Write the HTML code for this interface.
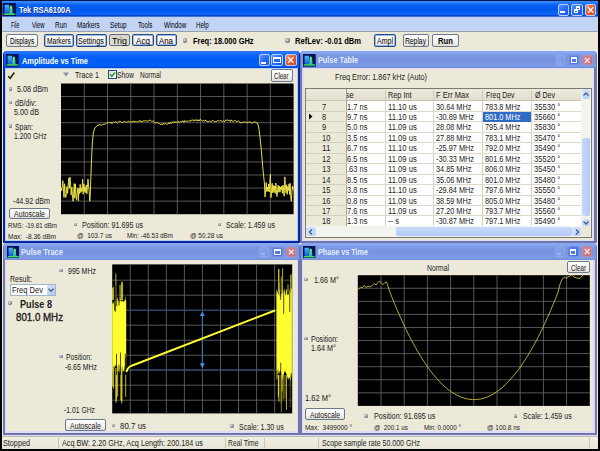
<!DOCTYPE html>
<html><head><meta charset="utf-8"><style>
html,body{margin:0;padding:0;width:600px;height:451px;overflow:hidden;background:#000;position:relative}
</style></head><body>
<div style="position:absolute;left:2px;top:0px;width:596px;height:1.2px;background:#081850"></div>
<div style="position:absolute;left:2px;top:1.2px;width:596px;height:15.8px;background:linear-gradient(#3a8cf8 0,#2a7cf8 12%,#0660f2 24%,#0058ec 62%,#0866f8 78%,#0a5ef0 86%,#0038c0 93%,#7a9ee8 100%)"></div>
<div style="position:absolute;left:2px;top:17px;width:596px;height:14.5px;background:#c2d4f4"></div>
<div style="position:absolute;left:2px;top:30.8px;width:596px;height:1.2px;background:#98a0b0"></div>
<div style="position:absolute;left:2px;top:32px;width:596px;height:18px;background:#ece9d8"></div>
<div style="position:absolute;left:2px;top:49.6px;width:596px;height:1px;background:#9a9ca8"></div>
<div style="position:absolute;left:2px;top:50px;width:596px;height:387px;background:#eeeef8"></div>
<div style="position:absolute;left:2px;top:436px;width:596px;height:13.3px;background:linear-gradient(#f2f0e4,#e8e5d6)"></div>
<div style="position:absolute;left:58px;top:438px;width:1px;height:10px;background:#c8c5b2"></div>
<div style="position:absolute;left:225px;top:438px;width:1px;height:10px;background:#c8c5b2"></div>
<div style="position:absolute;left:263.5px;top:438px;width:1px;height:10px;background:#c8c5b2"></div>
<div style="position:absolute;left:318px;top:438px;width:1px;height:10px;background:#c8c5b2"></div>
<div style="position:absolute;left:589px;top:438px;width:1px;height:10px;background:#c8c5b2"></div>
<svg style="position:absolute;left:3px;top:2.5px" width="13" height="13" viewBox="0 0 13 13"><rect x="0" y="0" width="13" height="13" fill="#061454"/><defs><linearGradient id="ig" x1="0" y1="0" x2="0" y2="1"><stop offset="0" stop-color="#48b8ff"/><stop offset="1" stop-color="#1058d8"/></linearGradient><linearGradient id="ig2" x1="0" y1="0" x2="0" y2="1"><stop offset="0" stop-color="#70f070"/><stop offset="1" stop-color="#20b8b0"/></linearGradient></defs><rect x="1.6" y="1.8" width="4.6" height="9" fill="url(#ig)"/><path d="M6.2 11 L6.7 4 Q8 1.2 9.3 4 L9.8 11 Z" fill="url(#ig2)"/><path d="M0.8 11.2 H12.2" stroke="#40e060" stroke-width="1.5"/></svg>
<div style="position:absolute;left:557.5px;top:3.5px;width:11.5px;height:12px;box-sizing:border-box;border:1px solid #b8d0ff;border-radius:2px;background:linear-gradient(135deg,#5a94ff,#2a6cf6 45%,#1a56e0)"></div>
<div style="position:absolute;left:560.38px;top:11.42px;width:4.6px;height:1.6px;background:#fff"></div>
<div style="position:absolute;left:571px;top:3.5px;width:12px;height:12px;box-sizing:border-box;border:1px solid #b8d0ff;border-radius:2px;background:linear-gradient(135deg,#5a94ff,#2a6cf6 45%,#1a56e0)"></div>
<div style="position:absolute;left:576.04px;top:5.9px;width:4.32px;height:4.32px;box-sizing:border-box;border:1px solid #fff;border-top-width:2px"></div>
<div style="position:absolute;left:573.64px;top:8.54px;width:4.32px;height:4.32px;box-sizing:border-box;border:1px solid #fff;border-top-width:2px;background:#2a68f0"></div>
<div style="position:absolute;left:584.5px;top:3.5px;width:11.5px;height:12px;box-sizing:border-box;border:1px solid #b8d0ff;border-radius:2px;background:linear-gradient(135deg,#f4a080,#e8602e 40%,#d04818)"></div>
<svg style="position:absolute;left:584.5px;top:3.5px" width="11.5" height="12"><path d="M3.11 3.24 L8.39 8.76 M8.39 3.24 L3.11 8.76" stroke="#fff" stroke-width="1.4"/></svg>
<div style="position:absolute;left:6.4px;top:34px;width:31.2px;height:13px;box-sizing:border-box;border:1px solid #6a7a90;border-radius:2px;background:linear-gradient(#fefefe,#f0efea 70%,#dedcd2)"></div>
<div style="position:absolute;left:43.7px;top:34px;width:30.6px;height:13px;box-sizing:border-box;border:1px solid #2a4a80;border-radius:2px;background:linear-gradient(#fdfdfb,#ecebe6);box-shadow:inset 0 0 0 1px #98b8f0"></div>
<div style="position:absolute;left:75.8px;top:34px;width:31.2px;height:13px;box-sizing:border-box;border:1px solid #2a4a80;border-radius:2px;background:linear-gradient(#fdfdfb,#ecebe6);box-shadow:inset 0 0 0 1px #98b8f0"></div>
<div style="position:absolute;left:108.7px;top:34.3px;width:21.8px;height:12.2px;box-sizing:border-box;border:1px solid #5a6a80;border-radius:2px;background:linear-gradient(#d8d5c8,#e4e1d4)"></div>
<div style="position:absolute;left:132px;top:34.3px;width:21.5px;height:12.2px;box-sizing:border-box;border:1px solid #2a4a80;border-radius:2px;background:linear-gradient(#fdfdfb,#ecebe6);box-shadow:inset 0 0 0 1px #98b8f0"></div>
<div style="position:absolute;left:155.5px;top:34.3px;width:21.5px;height:12.2px;box-sizing:border-box;border:1px solid #2a4a80;border-radius:2px;background:linear-gradient(#fdfdfb,#ecebe6);box-shadow:inset 0 0 0 1px #98b8f0"></div>
<div style="position:absolute;left:374px;top:34.4px;width:22px;height:12.6px;box-sizing:border-box;border:1px solid #2a4a80;border-radius:2px;background:linear-gradient(#fdfdfb,#ecebe6);box-shadow:inset 0 0 0 1px #98b8f0"></div>
<div style="position:absolute;left:403px;top:34.4px;width:26px;height:12.6px;box-sizing:border-box;border:1px solid #6a7a90;border-radius:2px;background:linear-gradient(#fefefe,#f0efea 70%,#dedcd2)"></div>
<div style="position:absolute;left:432px;top:34.4px;width:26.6px;height:12.6px;box-sizing:border-box;border:1px solid #6a7a90;border-radius:2px;background:linear-gradient(#fefefe,#f0efea 70%,#dedcd2)"></div>
<div style="position:absolute;left:182.8px;top:38.3px;width:4.4px;height:4.4px;border-radius:50%;background:radial-gradient(circle at 40% 40%,#f4f4f4 0,#a8b0bc 30%,#6a7080 65%,#505664)"></div>
<div style="position:absolute;left:285.4px;top:38.3px;width:4.4px;height:4.4px;border-radius:50%;background:radial-gradient(circle at 40% 40%,#f4f4f4 0,#a8b0bc 30%,#6a7080 65%,#505664)"></div>
<div style="position:absolute;left:3.2px;top:50.6px;width:296.8px;height:192.4px;background:#08289a;border-radius:4px 4px 0 0"></div>
<div style="position:absolute;left:4.2px;top:50.6px;width:294.8px;height:17.1px;background:linear-gradient(#3070e8 0,#2a78f8 8%,#0a64fa 22%,#005cf4 55%,#0060f8 88%,#0042c8 100%);border-radius:3px 3px 0 0"></div>
<div style="position:absolute;left:5px;top:67.7px;width:293px;height:173.1px;background:#b8ccf8"></div>
<div style="position:absolute;left:6.4px;top:68.6px;width:290.8px;height:171.2px;background:#ece9d8"></div>
<div style="position:absolute;left:300px;top:50.6px;width:296.6px;height:192.4px;background:#7076ac;border-radius:4px 4px 0 0"></div>
<div style="position:absolute;left:301px;top:50.6px;width:294.6px;height:17.1px;background:linear-gradient(#8aa8f0 0,#88a6f0 10%,#7a98e2 30%,#7694e0 60%,#7e9ee8 88%,#7088d8 100%);border-radius:3px 3px 0 0"></div>
<div style="position:absolute;left:302.3px;top:67.7px;width:292.2px;height:173.3px;background:#dcdcf6"></div>
<div style="position:absolute;left:303.5px;top:68.6px;width:289.8px;height:171.4px;background:#ece9d8"></div>
<div style="position:absolute;left:2.6px;top:243px;width:297.4px;height:192px;background:#7076ac;border-radius:4px 4px 0 0"></div>
<div style="position:absolute;left:3.6px;top:243px;width:295.4px;height:16.5px;background:linear-gradient(#8aa8f0 0,#88a6f0 10%,#7a98e2 30%,#7694e0 60%,#7e9ee8 88%,#7088d8 100%);border-radius:3px 3px 0 0"></div>
<div style="position:absolute;left:5px;top:259.5px;width:292.8px;height:173.2px;background:#dcdcf6"></div>
<div style="position:absolute;left:6.2px;top:260.4px;width:291px;height:171.1px;background:#ece9d8"></div>
<div style="position:absolute;left:300px;top:243px;width:296.6px;height:192px;background:#7076ac;border-radius:4px 4px 0 0"></div>
<div style="position:absolute;left:301px;top:243px;width:294.6px;height:16.5px;background:linear-gradient(#8aa8f0 0,#88a6f0 10%,#7a98e2 30%,#7694e0 60%,#7e9ee8 88%,#7088d8 100%);border-radius:3px 3px 0 0"></div>
<div style="position:absolute;left:302px;top:259.5px;width:292.5px;height:173.2px;background:#dcdcf6"></div>
<div style="position:absolute;left:302.8px;top:260.4px;width:290.5px;height:171.1px;background:#ece9d8"></div>
<div style="position:absolute;left:2px;top:435px;width:596px;height:1.3px;background:#e0e0f8"></div>
<div style="position:absolute;left:2px;top:436.3px;width:596px;height:0.7px;background:#bcb8a8"></div>
<svg style="position:absolute;left:6.3px;top:53.9px" width="12.7" height="12.7" viewBox="0 0 13 13"><rect x="0" y="0" width="13" height="13" fill="#061454"/><defs><linearGradient id="ig" x1="0" y1="0" x2="0" y2="1"><stop offset="0" stop-color="#48b8ff"/><stop offset="1" stop-color="#1058d8"/></linearGradient><linearGradient id="ig2" x1="0" y1="0" x2="0" y2="1"><stop offset="0" stop-color="#70f070"/><stop offset="1" stop-color="#20b8b0"/></linearGradient></defs><rect x="1.6" y="1.8" width="4.6" height="9" fill="url(#ig)"/><path d="M6.2 11 L6.7 4 Q8 1.2 9.3 4 L9.8 11 Z" fill="url(#ig2)"/><path d="M0.8 11.2 H12.2" stroke="#40e060" stroke-width="1.5"/></svg>
<svg style="position:absolute;left:303.2px;top:54px" width="12.7" height="12.7" viewBox="0 0 13 13"><rect x="0" y="0" width="13" height="13" fill="#061454"/><defs><linearGradient id="ig" x1="0" y1="0" x2="0" y2="1"><stop offset="0" stop-color="#48b8ff"/><stop offset="1" stop-color="#1058d8"/></linearGradient><linearGradient id="ig2" x1="0" y1="0" x2="0" y2="1"><stop offset="0" stop-color="#70f070"/><stop offset="1" stop-color="#20b8b0"/></linearGradient></defs><rect x="1.6" y="1.8" width="4.6" height="9" fill="url(#ig)"/><path d="M6.2 11 L6.7 4 Q8 1.2 9.3 4 L9.8 11 Z" fill="url(#ig2)"/><path d="M0.8 11.2 H12.2" stroke="#40e060" stroke-width="1.5"/></svg>
<svg style="position:absolute;left:6.5px;top:246px" width="12.4" height="12.4" viewBox="0 0 13 13"><rect x="0" y="0" width="13" height="13" fill="#061454"/><defs><linearGradient id="ig" x1="0" y1="0" x2="0" y2="1"><stop offset="0" stop-color="#48b8ff"/><stop offset="1" stop-color="#1058d8"/></linearGradient><linearGradient id="ig2" x1="0" y1="0" x2="0" y2="1"><stop offset="0" stop-color="#70f070"/><stop offset="1" stop-color="#20b8b0"/></linearGradient></defs><rect x="1.6" y="1.8" width="4.6" height="9" fill="url(#ig)"/><path d="M6.2 11 L6.7 4 Q8 1.2 9.3 4 L9.8 11 Z" fill="url(#ig2)"/><path d="M0.8 11.2 H12.2" stroke="#40e060" stroke-width="1.5"/></svg>
<svg style="position:absolute;left:303.2px;top:246px" width="12.4" height="12.4" viewBox="0 0 13 13"><rect x="0" y="0" width="13" height="13" fill="#061454"/><defs><linearGradient id="ig" x1="0" y1="0" x2="0" y2="1"><stop offset="0" stop-color="#48b8ff"/><stop offset="1" stop-color="#1058d8"/></linearGradient><linearGradient id="ig2" x1="0" y1="0" x2="0" y2="1"><stop offset="0" stop-color="#70f070"/><stop offset="1" stop-color="#20b8b0"/></linearGradient></defs><rect x="1.6" y="1.8" width="4.6" height="9" fill="url(#ig)"/><path d="M6.2 11 L6.7 4 Q8 1.2 9.3 4 L9.8 11 Z" fill="url(#ig2)"/><path d="M0.8 11.2 H12.2" stroke="#40e060" stroke-width="1.5"/></svg>
<div style="position:absolute;left:258.5px;top:54px;width:11.2px;height:12px;box-sizing:border-box;border:1px solid #b8d0ff;border-radius:2px;background:linear-gradient(135deg,#5a94ff,#2a6cf6 45%,#1a56e0)"></div>
<div style="position:absolute;left:261.3px;top:61.92px;width:4.48px;height:1.6px;background:#fff"></div>
<div style="position:absolute;left:271px;top:54px;width:12px;height:12px;box-sizing:border-box;border:1px solid #b8d0ff;border-radius:2px;background:linear-gradient(135deg,#5a94ff,#2a6cf6 45%,#1a56e0)"></div>
<div style="position:absolute;left:273.4px;top:56.64px;width:7.2px;height:6.72px;box-sizing:border-box;border:1px solid #fff;border-top-width:2px"></div>
<div style="position:absolute;left:285px;top:54px;width:11.5px;height:12px;box-sizing:border-box;border:1px solid #b8d0ff;border-radius:2px;background:linear-gradient(135deg,#f4a080,#e8602e 40%,#d04818)"></div>
<svg style="position:absolute;left:285px;top:54px" width="11.5" height="12"><path d="M3.11 3.24 L8.39 8.76 M8.39 3.24 L3.11 8.76" stroke="#fff" stroke-width="1.4"/></svg>
<div style="position:absolute;left:555.5px;top:54.5px;width:9.8px;height:10.8px;box-sizing:border-box;border:1px solid #8ca6ea;border-radius:2px;background:linear-gradient(135deg,#88a4ea,#7a96e2)"></div>
<div style="position:absolute;left:557.95px;top:61.63px;width:3.92px;height:1.6px;background:#a0b4ec"></div>
<div style="position:absolute;left:569px;top:54.5px;width:10.3px;height:10.8px;box-sizing:border-box;border:1px solid #6a8ce4;border-radius:2px;background:linear-gradient(135deg,#5a80e4,#4870d8)"></div>
<div style="position:absolute;left:571.06px;top:56.88px;width:6.18px;height:6.05px;box-sizing:border-box;border:1px solid #fff;border-top-width:2px"></div>
<div style="position:absolute;left:582px;top:54.5px;width:10.5px;height:10.8px;box-sizing:border-box;border:1px solid #c888a0;border-radius:2px;background:linear-gradient(135deg,#d08890,#c06c7c)"></div>
<svg style="position:absolute;left:582px;top:54.5px" width="10.5" height="10.8"><path d="M2.83 2.92 L7.67 7.88 M7.67 2.92 L2.83 7.88" stroke="#f4e0e8" stroke-width="1.4"/></svg>
<div style="position:absolute;left:258.7px;top:247px;width:10px;height:9.7px;box-sizing:border-box;border:1px solid #8ca6ea;border-radius:2px;background:linear-gradient(135deg,#88a4ea,#7a96e2)"></div>
<div style="position:absolute;left:261.2px;top:253.4px;width:4px;height:1.6px;background:#a0b4ec"></div>
<div style="position:absolute;left:272px;top:247px;width:11px;height:9.9px;box-sizing:border-box;border:1px solid #6a8ce4;border-radius:2px;background:linear-gradient(135deg,#5a80e4,#4870d8)"></div>
<div style="position:absolute;left:274.2px;top:249.18px;width:6.6px;height:5.54px;box-sizing:border-box;border:1px solid #fff;border-top-width:2px"></div>
<div style="position:absolute;left:285.8px;top:247px;width:10.5px;height:9.9px;box-sizing:border-box;border:1px solid #c888a0;border-radius:2px;background:linear-gradient(135deg,#d08890,#c06c7c)"></div>
<svg style="position:absolute;left:285.8px;top:247px" width="10.5" height="9.9"><path d="M2.83 2.67 L7.67 7.23 M7.67 2.67 L2.83 7.23" stroke="#f4e0e8" stroke-width="1.4"/></svg>
<div style="position:absolute;left:554.5px;top:246.2px;width:10px;height:11px;box-sizing:border-box;border:1px solid #8ca6ea;border-radius:2px;background:linear-gradient(135deg,#88a4ea,#7a96e2)"></div>
<div style="position:absolute;left:557px;top:253.46px;width:4px;height:1.6px;background:#a0b4ec"></div>
<div style="position:absolute;left:568px;top:246.2px;width:10.5px;height:11px;box-sizing:border-box;border:1px solid #6a8ce4;border-radius:2px;background:linear-gradient(135deg,#5a80e4,#4870d8)"></div>
<div style="position:absolute;left:570.1px;top:248.62px;width:6.3px;height:6.16px;box-sizing:border-box;border:1px solid #fff;border-top-width:2px"></div>
<div style="position:absolute;left:581.5px;top:246.2px;width:10.5px;height:11px;box-sizing:border-box;border:1px solid #c888a0;border-radius:2px;background:linear-gradient(135deg,#d08890,#c06c7c)"></div>
<svg style="position:absolute;left:581.5px;top:246.2px" width="10.5" height="11"><path d="M2.83 2.97 L7.67 8.03 M7.67 2.97 L2.83 8.03" stroke="#f4e0e8" stroke-width="1.4"/></svg>
<svg style="position:absolute;left:6px;top:70px" width="12" height="11"><path d="M2.2 6.2 L4.2 8.3 L8.3 2.5" stroke="#f0e8a0" stroke-width="2.6" fill="none" opacity="0.5"/><path d="M2.2 6.2 L4.2 8.3 L8.3 2.5" stroke="#28280a" stroke-width="1.6" fill="none"/></svg>
<svg style="position:absolute;left:62px;top:71px" width="9" height="7"><path d="M1 1.5 L7 1.5 L4 5.5Z" fill="#8a90a8"/></svg>
<div style="position:absolute;left:107.5px;top:70px;width:9px;height:9px;box-sizing:border-box;border:1px solid #1c5180;background:linear-gradient(135deg,#dcdcd6,#fff)"></div>
<svg style="position:absolute;left:107.5px;top:70px" width="9" height="9"><path d="M2 4.3 L3.8 6.3 L7 2.5" stroke="#21a121" stroke-width="1.5" fill="none"/></svg>
<div style="position:absolute;left:271px;top:69px;width:21.5px;height:12.5px;box-sizing:border-box;border:1px solid #6a7a90;border-radius:2px;background:linear-gradient(#fefefe,#f0efea 70%,#dedcd2)"></div>
<div style="position:absolute;left:8.8px;top:87.3px;width:3.4px;height:3.4px;border-radius:50%;background:radial-gradient(circle at 40% 40%,#f4f4f4 0,#a8b0bc 30%,#6a7080 65%,#505664)"></div>
<div style="position:absolute;left:8.8px;top:100.8px;width:3.4px;height:3.4px;border-radius:50%;background:radial-gradient(circle at 40% 40%,#f4f4f4 0,#a8b0bc 30%,#6a7080 65%,#505664)"></div>
<div style="position:absolute;left:8.8px;top:124.2px;width:3.4px;height:3.4px;border-radius:50%;background:radial-gradient(circle at 40% 40%,#f4f4f4 0,#a8b0bc 30%,#6a7080 65%,#505664)"></div>
<div style="position:absolute;left:9px;top:207.5px;width:41px;height:11.3px;box-sizing:border-box;border:1px solid #6a7a90;border-radius:2px;background:linear-gradient(#fefefe,#f0efea 70%,#dedcd2)"></div>
<div style="position:absolute;left:73.8px;top:222.8px;width:3.4px;height:3.4px;border-radius:50%;background:radial-gradient(circle at 40% 40%,#f4f4f4 0,#a8b0bc 30%,#6a7080 65%,#505664)"></div>
<div style="position:absolute;left:217.8px;top:222.8px;width:3.4px;height:3.4px;border-radius:50%;background:radial-gradient(circle at 40% 40%,#f4f4f4 0,#a8b0bc 30%,#6a7080 65%,#505664)"></div>
<svg style="position:absolute;left:61px;top:83px;overflow:hidden" width="233" height="132" viewBox="61 83 233 132"><rect x="61" y="83.5" width="232.6" height="130.7" fill="#000"/><path d="M84.26 83.5V214.2M107.52 83.5V214.2M130.78 83.5V214.2M154.04 83.5V214.2M177.3 83.5V214.2M200.56 83.5V214.2M223.82 83.5V214.2M247.08 83.5V214.2M270.34 83.5V214.2M61 96.57H293.6M61 109.64H293.6M61 122.71H293.6M61 135.78H293.6M61 148.85H293.6M61 161.92H293.6M61 174.99H293.6M61 188.06H293.6M61 201.13H293.6" stroke="#6c6c6c" stroke-width="0.8" fill="none"/><polyline points="61,187.75 61.6,190.86 62.2,186.67 62.8,180.7 63.4,188.15 64,197.47 64.6,183.76 65.2,193.41 65.8,197.4 66.4,193.28 67,186.4 67.6,193.35 68.2,185.09 68.8,178.02 69.4,188.19 70,177.03 70.6,184.61 71.2,195.12 71.8,187.26 72.4,194.4 73,201.2 73.6,194.15 74.2,183.6 74.8,198.32 75.4,183.83 76,195.31 76.6,199.72 77.2,192.98 77.8,188.16 78.4,200.79 79,188.2 79.6,193.74 80.2,184.39 80.8,192.43 81.4,188.39 82,191.34 82.6,179.25 83.2,194.19 83.8,183.92 84.4,191.33 85,187.11 85.6,192.65 86.2,184.97 86.8,193.91 87.4,187.35 88,179.14 88.6,186.08 89.2,191.81 89.8,201.28 90.4,192.09 90.6,185 91.3,165 92.2,145 93.3,133 94.8,128 97,125.8 99.5,124.7 100,124.01 100.8,125.26 101.6,125.28 102.4,124.55 103.2,124.47 104,123.7 104.8,124.19 105.6,124.08 106.4,123.37 107.2,122.98 108,122.57 108.8,122.51 109.6,122.66 110.4,122.5 111.2,122.1 112,123.49 112.8,122.46 113.6,121.8 114.4,122.62 115.2,121.66 116,122.42 116.8,122.29 117.6,122.97 118.4,122.3 119.2,121.26 120,121.46 120.8,121.72 121.6,122.16 122.4,122.72 123.2,122.08 124,121.85 124.8,121.19 125.6,121.84 126.4,122.7 127.2,121.78 128,121.44 128.8,121.1 129.6,122.15 130.4,122.09 131.2,121.58 132,121.92 132.8,121.56 133.6,120.96 134.4,122.26 135.2,121.16 136,121.72 136.8,122.1 137.6,121.79 138.4,120.95 139.2,121.56 140,120.56 140.8,121.91 141.6,121.28 142.4,121.92 143.2,120.84 144,120.51 144.8,120.99 145.6,120.82 146.4,120.98 147.2,120.87 148,121.14 148.8,121.07 149.6,120.07 150.4,120.22 151.2,120.64 152,121.54 152.8,120.68 153.6,121.46 154.4,122.18 155.2,122.96 156,122.92 156.8,122.67 157.6,122.48 158.4,123.51 159.2,123.3 160,124.36 160.8,124.39 161.6,123.84 162.4,125.04 163.2,123.44 164,123.46 164.8,124.05 165.6,123.72 166.4,123.85 167.2,124.6 168,123.75 168.8,122.46 169.6,123.89 170.4,122.67 171.2,123 172,123.15 172.8,121.69 173.6,122.02 174.4,122.47 175.2,121.45 176,122.63 176.8,121.78 177.6,122.14 178.4,121.14 179.2,122.66 180,122.21 180.8,121.7 181.6,122.14 182.4,120.88 183.2,120.94 184,122.35 184.8,120.52 185.6,121.44 186.4,121.11 187.2,121.36 188,121.18 188.8,121.05 189.6,120.74 190.4,121.48 191.2,119.99 192,120.62 192.8,119.61 193.6,120.95 194.4,120.77 195.2,119.62 196,120.76 196.8,119.65 197.6,121.18 198.4,119.77 199.2,121.01 200,119.52 200.8,119.89 201.6,120.46 202.4,120.98 203.2,120.25 204,120.71 204.8,121.29 205.6,119.97 206.4,121.26 207.2,121.6 208,121.24 208.8,121.57 209.6,121.09 210.4,121.69 211.2,121.82 212,120.5 212.8,120.56 213.6,121.22 214.4,121.87 215.2,121.69 216,121.38 216.8,121.67 217.6,120.53 218.4,120.49 219.2,121.33 220,120.41 220.8,120.27 221.6,121.36 222.4,121.06 223.2,120.94 224,121.44 224.8,121.61 225.6,120.09 226.4,120.31 227.2,120.02 228,120.11 228.8,120.73 229.6,119.96 230.4,121.51 231.2,120.01 232,120.5 232.8,121.7 233.6,121.09 234.4,120.42 235.2,120.64 236,121.15 236.8,121.8 237.6,121.37 238.4,121.02 239.2,121.64 240,122.41 240.8,122.62 241.6,122.73 242.4,122.79 243.2,121.65 244,122.18 244.8,122.21 245.6,122.22 246.4,122.13 247.2,122.8 248,122.37 248.8,121.98 249.6,122.15 250.4,121.82 251.2,123 252,123.29 252.8,122.76 253.6,122.26 254.4,122.06 255.2,121.85 256,122.44 256.8,122.94 257.3,122.8 258.5,126 260,137 261.5,152 263,170 264.4,183 265,196.98 265.6,190.62 266.2,182.53 266.8,191.61 267.4,187.04 268,191.19 268.6,183.98 269.2,192.09 269.8,182.7 270.4,174.17 271,197.63 271.6,190.41 272.2,183.4 272.8,192.88 273.4,185.47 274,192.07 274.6,185.86 275.2,193.5 275.8,183.02 276.4,189.58 277,196.5 277.6,189.83 278.2,185.23 278.8,192.27 279.4,186.16 280,192.13 280.6,186.95 281.2,189.75 281.8,185.94 282.4,193.3 283,185 283.6,191.24 284.2,196.22 284.8,176.91 285.4,185.26 286,192.75 286.6,184.77 287.2,194.35 287.8,186.42 288.4,190.49 289,183.86 289.6,194.45 290.2,183.32 290.8,198.58 291.4,201.22 292,190.91 292.6,186.03 293.2,190.29" stroke="#f0e848" stroke-width="0.95" fill="none"/></svg>
<svg style="position:absolute;left:112px;top:264px;overflow:hidden" width="181" height="150" viewBox="112 264 181 150"><rect x="112.2" y="264.4" width="180" height="149" fill="#000"/><path d="M130.25 264.4V413.4M148.3 264.4V413.4M166.35 264.4V413.4M184.4 264.4V413.4M202.45 264.4V413.4M220.5 264.4V413.4M238.55 264.4V413.4M256.6 264.4V413.4M274.65 264.4V413.4M112.2 280.2H292.2M112.2 295.2H292.2M112.2 310.2H292.2M112.2 325.2H292.2M112.2 340.2H292.2M112.2 355.2H292.2M112.2 370.2H292.2M112.2 385.2H292.2M112.2 400.2H292.2" stroke="#6c6c6c" stroke-width="0.8" fill="none"/><path d="M130 310.2H275 M130 369.8H275" stroke="#1e4a7a" stroke-width="1.1" fill="none"/><path d="M202.3 313V367" stroke="#3a7cc8" stroke-width="0.9" fill="none"/><path d="M199.9 316 L202.3 311.2 L204.7 316Z M199.9 363.3 L202.3 368.3 L204.7 363.3Z" fill="#3a90f0"/><polygon points="112.2,301.08 112.7,304.59 113.2,301.59 113.7,304.42 114.2,300.06 114.7,300.13 115.2,300.88 115.7,300.79 116.2,299.01 116.7,299.86 117.2,297.12 117.7,298.49 118.2,300.46 118.7,301.26 119.2,302.71 119.7,298.74 120.2,297.41 120.7,300.76 121.2,302.01 121.7,300.45 122.2,301.65 122.7,299.53 123.2,301.6 123.7,301.44 124.2,301.81 124.7,300.31 125.2,295.58 125.7,297.78 126.2,301.01 126.2,370.03 125.7,365.94 125.2,366.2 124.7,367.07 124.2,371.15 123.7,370.26 123.2,372.24 122.7,369.54 122.2,366.25 121.7,371.6 121.2,373.03 120.7,365.39 120.2,371.52 119.7,373.86 119.2,368.51 118.7,371.44 118.2,371.75 117.7,370.27 117.2,367.74 116.7,365.38 116.2,365.81 115.7,365.04 115.2,366.81 114.7,369.27 114.2,365.01 113.7,367.79 113.2,367.2 112.7,373.75 112.2,367.37" fill="#ffff30"/><path d="M120.97 300V284.52M121.69 300V281.79M112.54 300V287.95M122.6 300V282.06M119.73 300V285.19M113.39 300V286.74M115.9 300V273.49M116.09 300V286.59M115.27 300V286.8" stroke="#e8e030" stroke-width="0.8" fill="none"/><path d="M125.67 368V396.85M117.66 368V396.5M121.73 368V403.41M120.83 368V400.43M113.55 368V388.54M115.93 368V402.84M116.61 368V398.63M112.67 368V386.46M116.13 368V401.13M121.84 368V401.22" stroke="#e8e030" stroke-width="0.8" fill="none"/><path d="M116.78 286V306.2M119.04 286V305.6M114.54 286V310.72M115.59 286V311.74M125.17 286V300.21" stroke="#000" stroke-width="0.7" fill="none"/><path d="M118.97 375V364.76M125.59 375V358.09M116.49 375V353.78M125.29 375V353.79M120.56 375V352.55" stroke="#000" stroke-width="0.7" fill="none"/><path d="M126.5 372 Q127.5 367.5 131 366 L275 310.5" stroke="#ffff30" stroke-width="1.9" fill="none"/><polygon points="276.4,291.72 276.9,288.19 277.4,291.58 277.9,293.33 278.4,295.08 278.9,287.22 279.4,291.43 279.9,289.72 280.4,290.1 280.9,294.56 281.4,293.76 281.9,288.08 282.4,293.42 282.9,289.61 283.4,290.54 283.9,292.3 284.4,290.85 284.9,287.43 285.4,294.51 285.9,295.42 286.4,289.39 286.9,288.71 287.4,295.61 287.9,294.31 288.4,295.22 288.9,291.94 289.4,287.45 289.9,291.06 290.4,292.8 290.9,287.44 291.4,288.15 291.9,290.09 291.9,372.57 291.4,374.67 290.9,380.12 290.4,372.43 289.9,378.03 289.4,377.79 288.9,377.63 288.4,380.29 287.9,376.57 287.4,379.61 286.9,373.48 286.4,375.13 285.9,371.99 285.4,372.43 284.9,370.22 284.4,372.3 283.9,373.33 283.4,380.99 282.9,373.47 282.4,379.82 281.9,380.12 281.4,379.07 280.9,369.02 280.4,372.79 279.9,370.69 279.4,374.41 278.9,369.04 278.4,374.83 277.9,371.78 277.4,379.64 276.9,378.84 276.4,380.43" fill="#ffff30"/><path d="M287.96 292V284.53M280.53 292V278.12M281.16 292V276.15M282.61 292V268.35M279.01 292V269.16M290.54 292V274.94M279.91 292V283.13M291.95 292V274M278.66 292V268.85" stroke="#e8e030" stroke-width="0.8" fill="none"/><path d="M278.36 375V397.86M278.37 375V395.5M280.88 375V403.1M290.31 375V407.24M283.19 375V399.52M284.86 375V398.67M282.07 375V391.43M281.16 375V412.26M278.89 375V401.58M286.44 375V409.85" stroke="#e8e030" stroke-width="0.8" fill="none"/><path d="M280.24 268V296.78M280.73 268V299.99M283.69 268V313.85M289.73 268V311.82M277.33 268V290.81" stroke="#000" stroke-width="0.7" fill="none"/><path d="M287.64 413V382.39M284.1 413V374.68M277 413V369.79M290.9 413V380.64M289.83 413V384.31M280.73 413V362.73" stroke="#000" stroke-width="0.7" fill="none"/></svg>
<svg style="position:absolute;left:357px;top:275px;overflow:hidden" width="233" height="131" viewBox="357 275 233 131"><rect x="357.8" y="275.2" width="232" height="130.7" fill="#000"/><path d="M381 275.2V405.9M404.2 275.2V405.9M427.4 275.2V405.9M450.6 275.2V405.9M473.8 275.2V405.9M497 275.2V405.9M520.2 275.2V405.9M543.4 275.2V405.9M566.6 275.2V405.9M357.8 288.27H589.8M357.8 301.34H589.8M357.8 314.41H589.8M357.8 327.48H589.8M357.8 340.55H589.8M357.8 353.62H589.8M357.8 366.69H589.8M357.8 379.76H589.8M357.8 392.83H589.8" stroke="#6c6c6c" stroke-width="0.8" fill="none"/><polyline points="357.8,289.5 359,288.5 360.5,287.3 362,288 364.3,285.3 366,287.6 368,286.2 370,287 372,285.5 374.3,283.5 376,285 378,282.5 379.3,281 381,282.5 383,284.6 385,282.5 386.5,282 388.3,287 389.5,291 390,292.35 391.5,296.15 393,299.87 394.5,303.53 396,307.12 397.5,310.65 399,314.1 400.5,317.49 402,320.8 403.5,324.05 405,327.23 406.5,330.35 408,333.39 409.5,336.36 411,339.27 412.5,342.11 414,344.88 415.5,347.58 417,350.22 418.5,352.78 420,355.28 421.5,357.71 423,360.06 424.5,362.36 426,364.58 427.5,366.73 429,368.82 430.5,370.84 432,372.79 433.5,374.67 435,376.48 436.5,378.23 438,379.9 439.5,381.51 441,383.05 442.5,384.52 444,385.92 445.5,387.25 447,388.52 448.5,389.72 450,390.84 451.5,391.91 453,392.9 454.5,393.82 456,394.68 457.5,395.46 459,396.18 460.5,396.83 462,397.41 463.5,397.92 465,398.37 466.5,398.75 468,399.05 469.5,399.29 471,399.46 472.5,399.57 474,399.6 475.5,399.57 477,399.46 478.5,399.29 480,399.05 481.5,398.75 483,398.37 484.5,397.92 486,397.41 487.5,396.83 489,396.18 490.5,395.46 492,394.68 493.5,393.82 495,392.9 496.5,391.91 498,390.84 499.5,389.72 501,388.52 502.5,387.25 504,385.92 505.5,384.52 507,383.05 508.5,381.51 510,379.9 511.5,378.23 513,376.48 514.5,374.67 516,372.79 517.5,370.84 519,368.82 520.5,366.73 522,364.58 523.5,362.36 525,360.06 526.5,357.71 528,355.28 529.5,352.78 531,350.22 532.5,347.58 534,344.88 535.5,342.11 537,339.27 538.5,336.36 540,333.39 541.5,330.35 543,327.23 544.5,324.05 546,320.8 547.5,317.49 549,314.1 550.5,310.65 552,307.12 553.5,303.53 555,299.87 556.5,296.15 558,292.35 559.5,286 560.5,282.8 561.8,280 563,278.2 564.5,277 566,278.5 568,277 570,276 571.5,274.8 573,276 575,277.5 577,278 580,278.5 582,276 583.5,274.5 585,272 590,270" stroke="#c8c040" stroke-width="0.9" fill="none"/></svg>
<div style="position:absolute;left:304.6px;top:87.8px;width:287.7px;height:150px;background:#7a7a72"></div>
<div style="position:absolute;left:305.6px;top:88.8px;width:285.7px;height:148px;background:#fff"></div>
<div style="position:absolute;left:305.6px;top:88.8px;width:275.4px;height:12.2px;background:linear-gradient(#ebeadb,#e2dfcf)"></div>
<div style="position:absolute;left:305.6px;top:100.3px;width:275.4px;height:0.9px;background:#c8c4b0"></div>
<div style="position:absolute;left:305.6px;top:101px;width:40.4px;height:125.4px;background:#ebe9d8"></div>
<div style="position:absolute;left:345.5px;top:88.8px;width:0.9px;height:137.6px;background:#a8a590"></div>
<div style="position:absolute;left:384.6px;top:101px;width:0.9px;height:125.4px;background:#d6d3c4"></div>
<div style="position:absolute;left:384.6px;top:89.8px;width:0.9px;height:10.7px;background:#cfccbc"></div>
<div style="position:absolute;left:433.4px;top:101px;width:0.9px;height:125.4px;background:#d6d3c4"></div>
<div style="position:absolute;left:433.4px;top:89.8px;width:0.9px;height:10.7px;background:#cfccbc"></div>
<div style="position:absolute;left:481.6px;top:101px;width:0.9px;height:125.4px;background:#d6d3c4"></div>
<div style="position:absolute;left:481.6px;top:89.8px;width:0.9px;height:10.7px;background:#cfccbc"></div>
<div style="position:absolute;left:531px;top:101px;width:0.9px;height:125.4px;background:#d6d3c4"></div>
<div style="position:absolute;left:531px;top:89.8px;width:0.9px;height:10.7px;background:#cfccbc"></div>
<div style="position:absolute;left:580.5px;top:101px;width:0.5px;height:125.4px;background:#d6d3c4"></div>
<div style="position:absolute;left:346px;top:110.95px;width:235px;height:0.9px;background:#dcd9ca"></div>
<div style="position:absolute;left:305.6px;top:110.95px;width:40.4px;height:0.9px;background:#d4d0bf"></div>
<div style="position:absolute;left:346px;top:121.4px;width:235px;height:0.9px;background:#dcd9ca"></div>
<div style="position:absolute;left:305.6px;top:121.4px;width:40.4px;height:0.9px;background:#d4d0bf"></div>
<div style="position:absolute;left:346px;top:131.85px;width:235px;height:0.9px;background:#dcd9ca"></div>
<div style="position:absolute;left:305.6px;top:131.85px;width:40.4px;height:0.9px;background:#d4d0bf"></div>
<div style="position:absolute;left:346px;top:142.3px;width:235px;height:0.9px;background:#dcd9ca"></div>
<div style="position:absolute;left:305.6px;top:142.3px;width:40.4px;height:0.9px;background:#d4d0bf"></div>
<div style="position:absolute;left:346px;top:152.75px;width:235px;height:0.9px;background:#dcd9ca"></div>
<div style="position:absolute;left:305.6px;top:152.75px;width:40.4px;height:0.9px;background:#d4d0bf"></div>
<div style="position:absolute;left:346px;top:163.2px;width:235px;height:0.9px;background:#dcd9ca"></div>
<div style="position:absolute;left:305.6px;top:163.2px;width:40.4px;height:0.9px;background:#d4d0bf"></div>
<div style="position:absolute;left:346px;top:173.65px;width:235px;height:0.9px;background:#dcd9ca"></div>
<div style="position:absolute;left:305.6px;top:173.65px;width:40.4px;height:0.9px;background:#d4d0bf"></div>
<div style="position:absolute;left:346px;top:184.1px;width:235px;height:0.9px;background:#dcd9ca"></div>
<div style="position:absolute;left:305.6px;top:184.1px;width:40.4px;height:0.9px;background:#d4d0bf"></div>
<div style="position:absolute;left:346px;top:194.55px;width:235px;height:0.9px;background:#dcd9ca"></div>
<div style="position:absolute;left:305.6px;top:194.55px;width:40.4px;height:0.9px;background:#d4d0bf"></div>
<div style="position:absolute;left:346px;top:205px;width:235px;height:0.9px;background:#dcd9ca"></div>
<div style="position:absolute;left:305.6px;top:205px;width:40.4px;height:0.9px;background:#d4d0bf"></div>
<div style="position:absolute;left:346px;top:215.45px;width:235px;height:0.9px;background:#dcd9ca"></div>
<div style="position:absolute;left:305.6px;top:215.45px;width:40.4px;height:0.9px;background:#d4d0bf"></div>
<div style="position:absolute;left:346px;top:225.9px;width:235px;height:0.9px;background:#dcd9ca"></div>
<div style="position:absolute;left:305.6px;top:225.9px;width:40.4px;height:0.9px;background:#d4d0bf"></div>
<div style="position:absolute;left:483px;top:111.5px;width:48px;height:10.1px;background:#316ac5"></div>
<svg style="position:absolute;left:308px;top:113px" width="6" height="7"><path d="M1 0.5 L4.5 3.5 L1 6.5Z" fill="#000"/></svg>
<div style="position:absolute;left:581px;top:88.8px;width:10.3px;height:137.6px;background:#f4f4ee"></div>
<div style="position:absolute;left:582px;top:88.8px;width:8.3px;height:10.7px;background:linear-gradient(135deg,#d8e6fc,#b8d0f8);border-radius:2px"></div>
<svg style="position:absolute;left:582px;top:90px" width="8" height="8"><path d="M1.5 5.5 L4 3 L6.5 5.5" stroke="#4d6185" stroke-width="1.4" fill="none"/></svg>
<div style="position:absolute;left:582px;top:138.3px;width:8.3px;height:78.2px;background:linear-gradient(90deg,#c6d8fb,#b4cbf6);border-radius:2px"></div>
<div style="position:absolute;left:582px;top:218.5px;width:8.3px;height:7.5px;background:linear-gradient(135deg,#d8e6fc,#b8d0f8);border-radius:2px"></div>
<svg style="position:absolute;left:582px;top:218.5px" width="8" height="8"><path d="M1.5 2.5 L4 5 L6.5 2.5" stroke="#4d6185" stroke-width="1.4" fill="none"/></svg>
<div style="position:absolute;left:305.6px;top:226.4px;width:275.4px;height:10.4px;background:#f4f4ee"></div>
<div style="position:absolute;left:306px;top:227px;width:10px;height:9px;background:linear-gradient(135deg,#d8e6fc,#b8d0f8);border-radius:2px"></div>
<svg style="position:absolute;left:307px;top:227.5px" width="8" height="8"><path d="M5 1.5 L2.5 4 L5 6.5" stroke="#4d6185" stroke-width="1.4" fill="none"/></svg>
<div style="position:absolute;left:396px;top:227px;width:176px;height:9px;background:linear-gradient(#c8dafc,#b4cbf6);border-radius:2px"></div>
<div style="position:absolute;left:572px;top:227px;width:9px;height:9px;background:linear-gradient(135deg,#d8e6fc,#b8d0f8);border-radius:2px"></div>
<svg style="position:absolute;left:573px;top:227.5px" width="8" height="8"><path d="M3 1.5 L5.5 4 L3 6.5" stroke="#4d6185" stroke-width="1.4" fill="none"/></svg>
<div style="position:absolute;left:581px;top:226.4px;width:10.3px;height:10.4px;background:#ece9d8"></div>
<div style="position:absolute;left:59.3px;top:268.8px;width:3.4px;height:3.4px;border-radius:50%;background:radial-gradient(circle at 40% 40%,#f4f4f4 0,#a8b0bc 30%,#6a7080 65%,#505664)"></div>
<div style="position:absolute;left:10px;top:283.6px;width:46px;height:12.2px;background:#a0b4cc"></div>
<div style="position:absolute;left:11px;top:284.6px;width:44px;height:10.2px;background:#fff"></div>
<div style="position:absolute;left:46.5px;top:285px;width:8.5px;height:9.5px;background:linear-gradient(135deg,#d8e6fc,#b0c8f6);border-radius:1px"></div>
<svg style="position:absolute;left:47px;top:286px" width="8" height="8"><path d="M1.5 2.8 L4 5.3 L6.5 2.8" stroke="#4d6185" stroke-width="1.4" fill="none"/></svg>
<div style="position:absolute;left:8.3px;top:301.3px;width:3.4px;height:3.4px;border-radius:50%;background:radial-gradient(circle at 40% 40%,#f4f4f4 0,#a8b0bc 30%,#6a7080 65%,#505664)"></div>
<div style="position:absolute;left:59.3px;top:354.8px;width:3.4px;height:3.4px;border-radius:50%;background:radial-gradient(circle at 40% 40%,#f4f4f4 0,#a8b0bc 30%,#6a7080 65%,#505664)"></div>
<div style="position:absolute;left:65px;top:419.4px;width:41px;height:11.6px;box-sizing:border-box;border:1px solid #6a7a90;border-radius:2px;background:linear-gradient(#fefefe,#f0efea 70%,#dedcd2)"></div>
<div style="position:absolute;left:111.8px;top:423.8px;width:3.4px;height:3.4px;border-radius:50%;background:radial-gradient(circle at 40% 40%,#f4f4f4 0,#a8b0bc 30%,#6a7080 65%,#505664)"></div>
<div style="position:absolute;left:230.3px;top:424.3px;width:3.4px;height:3.4px;border-radius:50%;background:radial-gradient(circle at 40% 40%,#f4f4f4 0,#a8b0bc 30%,#6a7080 65%,#505664)"></div>
<div style="position:absolute;left:566.7px;top:261px;width:22.9px;height:12px;box-sizing:border-box;border:1px solid #6a7a90;border-radius:2px;background:linear-gradient(#fefefe,#f0efea 70%,#dedcd2)"></div>
<div style="position:absolute;left:304.3px;top:277.8px;width:3.4px;height:3.4px;border-radius:50%;background:radial-gradient(circle at 40% 40%,#f4f4f4 0,#a8b0bc 30%,#6a7080 65%,#505664)"></div>
<div style="position:absolute;left:304.3px;top:336.8px;width:3.4px;height:3.4px;border-radius:50%;background:radial-gradient(circle at 40% 40%,#f4f4f4 0,#a8b0bc 30%,#6a7080 65%,#505664)"></div>
<div style="position:absolute;left:305px;top:408px;width:40px;height:12px;box-sizing:border-box;border:1px solid #6a7a90;border-radius:2px;background:linear-gradient(#fefefe,#f0efea 70%,#dedcd2)"></div>
<div style="position:absolute;left:364.3px;top:414.3px;width:3.4px;height:3.4px;border-radius:50%;background:radial-gradient(circle at 40% 40%,#f4f4f4 0,#a8b0bc 30%,#6a7080 65%,#505664)"></div>
<div style="position:absolute;left:513.8px;top:414.3px;width:3.4px;height:3.4px;border-radius:50%;background:radial-gradient(circle at 40% 40%,#f4f4f4 0,#a8b0bc 30%,#6a7080 65%,#505664)"></div>
<div style="position:absolute;left:19px;top:4.9px;height:10px;line-height:10px;white-space:pre;font-family:'Liberation Sans', sans-serif;font-size:8.8px;font-weight:bold;color:#fff;transform:scaleX(0.8380);transform-origin:0 0;text-shadow:0.7px 0.7px 0 #0a2a90">Tek RSA6100A</div>
<div style="position:absolute;left:11.4px;top:19.5px;height:10px;line-height:10px;white-space:pre;font-family:'Liberation Sans', sans-serif;font-size:8.3px;font-weight:normal;color:#000;transform:scaleX(0.6280);transform-origin:0 0;">File</div>
<div style="position:absolute;left:32px;top:19.5px;height:10px;line-height:10px;white-space:pre;font-family:'Liberation Sans', sans-serif;font-size:8.3px;font-weight:normal;color:#000;transform:scaleX(0.7061);transform-origin:0 0;">View</div>
<div style="position:absolute;left:55px;top:19.5px;height:10px;line-height:10px;white-space:pre;font-family:'Liberation Sans', sans-serif;font-size:8.3px;font-weight:normal;color:#000;transform:scaleX(0.7877);transform-origin:0 0;">Run</div>
<div style="position:absolute;left:77.4px;top:19.5px;height:10px;line-height:10px;white-space:pre;font-family:'Liberation Sans', sans-serif;font-size:8.3px;font-weight:normal;color:#000;transform:scaleX(0.7541);transform-origin:0 0;">Markers</div>
<div style="position:absolute;left:110.4px;top:19.5px;height:10px;line-height:10px;white-space:pre;font-family:'Liberation Sans', sans-serif;font-size:8.3px;font-weight:normal;color:#000;transform:scaleX(0.7654);transform-origin:0 0;">Setup</div>
<div style="position:absolute;left:138px;top:19.5px;height:10px;line-height:10px;white-space:pre;font-family:'Liberation Sans', sans-serif;font-size:8.3px;font-weight:normal;color:#000;transform:scaleX(0.7432);transform-origin:0 0;">Tools</div>
<div style="position:absolute;left:163.6px;top:19.5px;height:10px;line-height:10px;white-space:pre;font-family:'Liberation Sans', sans-serif;font-size:8.3px;font-weight:normal;color:#000;transform:scaleX(0.7589);transform-origin:0 0;">Window</div>
<div style="position:absolute;left:196.4px;top:19.5px;height:10px;line-height:10px;white-space:pre;font-family:'Liberation Sans', sans-serif;font-size:8.3px;font-weight:normal;color:#000;transform:scaleX(0.7378);transform-origin:0 0;">Help</div>
<div style="position:absolute;left:9.5px;top:36.3px;height:10px;line-height:10px;white-space:pre;font-family:'Liberation Sans', sans-serif;font-size:8.3px;font-weight:normal;color:#000;transform:scaleX(0.7685);transform-origin:0 0;">Displays</div>
<div style="position:absolute;left:46.8px;top:36.3px;height:10px;line-height:10px;white-space:pre;font-family:'Liberation Sans', sans-serif;font-size:8.3px;font-weight:normal;color:#000;transform:scaleX(0.7942);transform-origin:0 0;">Markers</div>
<div style="position:absolute;left:78.3px;top:36.3px;height:10px;line-height:10px;white-space:pre;font-family:'Liberation Sans', sans-serif;font-size:8.3px;font-weight:normal;color:#000;transform:scaleX(0.8638);transform-origin:0 0;">Settings</div>
<div style="position:absolute;left:112px;top:36.3px;height:10px;line-height:10px;white-space:pre;font-family:'Liberation Sans', sans-serif;font-size:8.3px;font-weight:normal;color:#000;transform:scaleX(1.0726);transform-origin:0 0;">Trig</div>
<div style="position:absolute;left:136px;top:36.3px;height:10px;line-height:10px;white-space:pre;font-family:'Liberation Sans', sans-serif;font-size:8.3px;font-weight:normal;color:#000;transform:scaleX(0.9792);transform-origin:0 0;">Acq</div>
<div style="position:absolute;left:159px;top:36.3px;height:10px;line-height:10px;white-space:pre;font-family:'Liberation Sans', sans-serif;font-size:8.3px;font-weight:normal;color:#000;transform:scaleX(0.9481);transform-origin:0 0;">Ana</div>
<div style="position:absolute;left:377px;top:36.3px;height:10px;line-height:10px;white-space:pre;font-family:'Liberation Sans', sans-serif;font-size:8.3px;font-weight:normal;color:#000;transform:scaleX(0.8463);transform-origin:0 0;">Ampl</div>
<div style="position:absolute;left:405px;top:36.3px;height:10px;line-height:10px;white-space:pre;font-family:'Liberation Sans', sans-serif;font-size:8.3px;font-weight:normal;color:#000;transform:scaleX(0.8131);transform-origin:0 0;">Replay</div>
<div style="position:absolute;left:438px;top:36.3px;height:10px;line-height:10px;white-space:pre;font-family:'Liberation Sans', sans-serif;font-size:8.3px;font-weight:bold;color:#000;transform:scaleX(0.9293);transform-origin:0 0;">Run</div>
<div style="position:absolute;left:193.4px;top:36.3px;height:10px;line-height:10px;white-space:pre;font-family:'Liberation Sans', sans-serif;font-size:8.3px;font-weight:bold;color:#000;transform:scaleX(0.9001);transform-origin:0 0;">Freq: 18.000 GHz</div>
<div style="position:absolute;left:295px;top:36.3px;height:10px;line-height:10px;white-space:pre;font-family:'Liberation Sans', sans-serif;font-size:8.3px;font-weight:bold;color:#000;transform:scaleX(0.9117);transform-origin:0 0;">RefLev: -0.01 dBm</div>
<div style="position:absolute;left:21.5px;top:55.6px;height:10px;line-height:10px;white-space:pre;font-family:'Liberation Sans', sans-serif;font-size:9px;font-weight:bold;color:#fff;transform:scaleX(0.8265);transform-origin:0 0;">Amplitude vs Time</div>
<div style="position:absolute;left:318px;top:55.3px;height:10px;line-height:10px;white-space:pre;font-family:'Liberation Sans', sans-serif;font-size:9px;font-weight:bold;color:#e6ecfb;transform:scaleX(0.8104);transform-origin:0 0;">Pulse Table</div>
<div style="position:absolute;left:21px;top:246.8px;height:10px;line-height:10px;white-space:pre;font-family:'Liberation Sans', sans-serif;font-size:9px;font-weight:bold;color:#e6ecfb;transform:scaleX(0.8392);transform-origin:0 0;">Pulse Trace</div>
<div style="position:absolute;left:318px;top:246.8px;height:10px;line-height:10px;white-space:pre;font-family:'Liberation Sans', sans-serif;font-size:9px;font-weight:bold;color:#e6ecfb;transform:scaleX(0.8016);transform-origin:0 0;">Phase vs Time</div>
<div style="position:absolute;left:75px;top:70.3px;height:10px;line-height:10px;white-space:pre;font-family:'Liberation Sans', sans-serif;font-size:8.3px;font-weight:normal;color:#222;transform:scaleX(0.8624);transform-origin:0 0;">Trace 1</div>
<div style="position:absolute;left:117px;top:70.3px;height:10px;line-height:10px;white-space:pre;font-family:'Liberation Sans', sans-serif;font-size:8.3px;font-weight:normal;color:#222;transform:scaleX(0.8187);transform-origin:0 0;">Show</div>
<div style="position:absolute;left:140px;top:70.3px;height:10px;line-height:10px;white-space:pre;font-family:'Liberation Sans', sans-serif;font-size:8.3px;font-weight:normal;color:#222;transform:scaleX(0.7850);transform-origin:0 0;">Normal</div>
<div style="position:absolute;left:274.3px;top:70.8px;height:10px;line-height:10px;white-space:pre;font-family:'Liberation Sans', sans-serif;font-size:8.3px;font-weight:normal;color:#222;transform:scaleX(0.7313);transform-origin:0 0;">Clear</div>
<div style="position:absolute;left:17px;top:84.3px;height:10px;line-height:10px;white-space:pre;font-family:'Liberation Sans', sans-serif;font-size:8.3px;font-weight:normal;color:#222;transform:scaleX(0.8729);transform-origin:0 0;">5.08 dBm</div>
<div style="position:absolute;left:14.5px;top:98.3px;height:10px;line-height:10px;white-space:pre;font-family:'Liberation Sans', sans-serif;font-size:8.3px;font-weight:normal;color:#222;transform:scaleX(0.8473);transform-origin:0 0;">dB/div:</div>
<div style="position:absolute;left:13.8px;top:107.3px;height:10px;line-height:10px;white-space:pre;font-family:'Liberation Sans', sans-serif;font-size:8.3px;font-weight:normal;color:#222;transform:scaleX(0.8738);transform-origin:0 0;">5.00 dB</div>
<div style="position:absolute;left:14.5px;top:121.7px;height:10px;line-height:10px;white-space:pre;font-family:'Liberation Sans', sans-serif;font-size:8.3px;font-weight:normal;color:#222;transform:scaleX(0.8300);transform-origin:0 0;">Span:</div>
<div style="position:absolute;left:14px;top:131px;height:10px;line-height:10px;white-space:pre;font-family:'Liberation Sans', sans-serif;font-size:8.3px;font-weight:normal;color:#222;transform:scaleX(0.8243);transform-origin:0 0;">1.200 GHz</div>
<div style="position:absolute;left:13px;top:196.3px;height:10px;line-height:10px;white-space:pre;font-family:'Liberation Sans', sans-serif;font-size:8.3px;font-weight:normal;color:#222;transform:scaleX(0.8627);transform-origin:0 0;">-44.92 dBm</div>
<div style="position:absolute;left:14px;top:208.5px;height:10px;line-height:10px;white-space:pre;font-family:'Liberation Sans', sans-serif;font-size:8.3px;font-weight:normal;color:#222;transform:scaleX(0.8508);transform-origin:0 0;">Autoscale</div>
<div style="position:absolute;left:8px;top:221.1px;height:10px;line-height:10px;white-space:pre;font-family:'Liberation Sans', sans-serif;font-size:7.8px;font-weight:normal;color:#222;transform:scaleX(0.7907);transform-origin:0 0;">RMS: -19.81 dBm</div>
<div style="position:absolute;left:8px;top:231.7px;height:10px;line-height:10px;white-space:pre;font-family:'Liberation Sans', sans-serif;font-size:7.8px;font-weight:normal;color:#222;transform:scaleX(0.8391);transform-origin:0 0;">Max:  -8.36 dBm</div>
<div style="position:absolute;left:82px;top:220.3px;height:10px;line-height:10px;white-space:pre;font-family:'Liberation Sans', sans-serif;font-size:8.3px;font-weight:normal;color:#222;transform:scaleX(0.8643);transform-origin:0 0;">Position: 91.695 us</div>
<div style="position:absolute;left:77px;top:231.3px;height:10px;line-height:10px;white-space:pre;font-family:'Liberation Sans', sans-serif;font-size:7.8px;font-weight:normal;color:#222;transform:scaleX(0.8299);transform-origin:0 0;">@  103.7 us</div>
<div style="position:absolute;left:127px;top:231.3px;height:10px;line-height:10px;white-space:pre;font-family:'Liberation Sans', sans-serif;font-size:7.8px;font-weight:normal;color:#222;transform:scaleX(0.8042);transform-origin:0 0;">Min: -46.53 dBm</div>
<div style="position:absolute;left:190px;top:231.3px;height:10px;line-height:10px;white-space:pre;font-family:'Liberation Sans', sans-serif;font-size:7.8px;font-weight:normal;color:#222;transform:scaleX(0.8250);transform-origin:0 0;">@ 50.28 us</div>
<div style="position:absolute;left:226px;top:220.3px;height:10px;line-height:10px;white-space:pre;font-family:'Liberation Sans', sans-serif;font-size:8.3px;font-weight:normal;color:#222;transform:scaleX(0.8566);transform-origin:0 0;">Scale: 1.459 us</div>
<div style="position:absolute;left:335px;top:72px;height:10px;line-height:10px;white-space:pre;font-family:'Liberation Sans', sans-serif;font-size:8.3px;font-weight:normal;color:#222;transform:scaleX(0.8789);transform-origin:0 0;">Freq Error: 1.867 kHz (Auto)</div>
<div style="position:absolute;left:344.8px;top:89.8px;height:10px;line-height:10px;white-space:pre;font-family:'Liberation Sans', sans-serif;font-size:8.3px;font-weight:normal;color:#222;transform:scaleX(1.0039);transform-origin:0 0;clip-path:inset(0 0 0 2px)">se</div>
<div style="position:absolute;left:388px;top:89.8px;height:10px;line-height:10px;white-space:pre;font-family:'Liberation Sans', sans-serif;font-size:8.3px;font-weight:normal;color:#222;transform:scaleX(0.8780);transform-origin:0 0;">Rep Int</div>
<div style="position:absolute;left:436px;top:89.8px;height:10px;line-height:10px;white-space:pre;font-family:'Liberation Sans', sans-serif;font-size:8.3px;font-weight:normal;color:#222;transform:scaleX(0.9060);transform-origin:0 0;">F Err Max</div>
<div style="position:absolute;left:485.7px;top:89.8px;height:10px;line-height:10px;white-space:pre;font-family:'Liberation Sans', sans-serif;font-size:8.3px;font-weight:normal;color:#222;transform:scaleX(0.8352);transform-origin:0 0;">Freq Dev</div>
<div style="position:absolute;left:534.5px;top:89.8px;height:10px;line-height:10px;white-space:pre;font-family:'Liberation Sans', sans-serif;font-size:8.3px;font-weight:normal;color:#222;transform:scaleX(0.8505);transform-origin:0 0;">Ø Dev</div>
<div style="position:absolute;left:321.5px;top:101.52px;height:10px;line-height:10px;white-space:pre;font-family:'Liberation Sans', sans-serif;font-size:8.3px;font-weight:normal;color:#222;transform:scaleX(0.9081);transform-origin:0 0;">7</div>
<div style="position:absolute;left:346.5px;top:101.52px;height:10px;line-height:10px;white-space:pre;font-family:'Liberation Sans', sans-serif;font-size:8.3px;font-weight:normal;color:#222;transform:scaleX(0.9023);transform-origin:0 0;">1.7 ns</div>
<div style="position:absolute;left:388px;top:101.52px;height:10px;line-height:10px;white-space:pre;font-family:'Liberation Sans', sans-serif;font-size:8.3px;font-weight:normal;color:#222;transform:scaleX(0.9225);transform-origin:0 0;">11.10 us</div>
<div style="position:absolute;left:436px;top:101.52px;height:10px;line-height:10px;white-space:pre;font-family:'Liberation Sans', sans-serif;font-size:8.3px;font-weight:normal;color:#222;transform:scaleX(0.8822);transform-origin:0 0;">30.64 MHz</div>
<div style="position:absolute;left:485px;top:101.52px;height:10px;line-height:10px;white-space:pre;font-family:'Liberation Sans', sans-serif;font-size:8.3px;font-weight:normal;color:#222;transform:scaleX(0.8822);transform-origin:0 0;">783.8 MHz</div>
<div style="position:absolute;left:534px;top:101.52px;height:10px;line-height:10px;white-space:pre;font-family:'Liberation Sans', sans-serif;font-size:8.3px;font-weight:normal;color:#222;transform:scaleX(0.9163);transform-origin:0 0;">35530 °</div>
<div style="position:absolute;left:321.5px;top:111.97px;height:10px;line-height:10px;white-space:pre;font-family:'Liberation Sans', sans-serif;font-size:8.3px;font-weight:normal;color:#222;transform:scaleX(0.9081);transform-origin:0 0;">8</div>
<div style="position:absolute;left:346.5px;top:111.97px;height:10px;line-height:10px;white-space:pre;font-family:'Liberation Sans', sans-serif;font-size:8.3px;font-weight:normal;color:#222;transform:scaleX(0.9023);transform-origin:0 0;">9.7 ns</div>
<div style="position:absolute;left:388px;top:111.97px;height:10px;line-height:10px;white-space:pre;font-family:'Liberation Sans', sans-serif;font-size:8.3px;font-weight:normal;color:#222;transform:scaleX(0.9225);transform-origin:0 0;">11.10 us</div>
<div style="position:absolute;left:436px;top:111.97px;height:10px;line-height:10px;white-space:pre;font-family:'Liberation Sans', sans-serif;font-size:8.3px;font-weight:normal;color:#222;transform:scaleX(0.8860);transform-origin:0 0;">-30.89 MHz</div>
<div style="position:absolute;left:485px;top:111.97px;height:10px;line-height:10px;white-space:pre;font-family:'Liberation Sans', sans-serif;font-size:8.3px;font-weight:normal;color:#fff;transform:scaleX(0.8822);transform-origin:0 0;">801.0 MHz</div>
<div style="position:absolute;left:534px;top:111.97px;height:10px;line-height:10px;white-space:pre;font-family:'Liberation Sans', sans-serif;font-size:8.3px;font-weight:normal;color:#222;transform:scaleX(0.9163);transform-origin:0 0;">35660 °</div>
<div style="position:absolute;left:321.5px;top:122.42px;height:10px;line-height:10px;white-space:pre;font-family:'Liberation Sans', sans-serif;font-size:8.3px;font-weight:normal;color:#222;transform:scaleX(0.9081);transform-origin:0 0;">9</div>
<div style="position:absolute;left:346.5px;top:122.42px;height:10px;line-height:10px;white-space:pre;font-family:'Liberation Sans', sans-serif;font-size:8.3px;font-weight:normal;color:#222;transform:scaleX(0.9023);transform-origin:0 0;">5.0 ns</div>
<div style="position:absolute;left:388px;top:122.42px;height:10px;line-height:10px;white-space:pre;font-family:'Liberation Sans', sans-serif;font-size:8.3px;font-weight:normal;color:#222;transform:scaleX(0.9225);transform-origin:0 0;">11.09 us</div>
<div style="position:absolute;left:436px;top:122.42px;height:10px;line-height:10px;white-space:pre;font-family:'Liberation Sans', sans-serif;font-size:8.3px;font-weight:normal;color:#222;transform:scaleX(0.8822);transform-origin:0 0;">28.08 MHz</div>
<div style="position:absolute;left:485px;top:122.42px;height:10px;line-height:10px;white-space:pre;font-family:'Liberation Sans', sans-serif;font-size:8.3px;font-weight:normal;color:#222;transform:scaleX(0.8822);transform-origin:0 0;">795.4 MHz</div>
<div style="position:absolute;left:534px;top:122.42px;height:10px;line-height:10px;white-space:pre;font-family:'Liberation Sans', sans-serif;font-size:8.3px;font-weight:normal;color:#222;transform:scaleX(0.9163);transform-origin:0 0;">35830 °</div>
<div style="position:absolute;left:321.5px;top:132.88px;height:10px;line-height:10px;white-space:pre;font-family:'Liberation Sans', sans-serif;font-size:8.3px;font-weight:normal;color:#222;transform:scaleX(0.9096);transform-origin:0 0;">10</div>
<div style="position:absolute;left:346.5px;top:132.88px;height:10px;line-height:10px;white-space:pre;font-family:'Liberation Sans', sans-serif;font-size:8.3px;font-weight:normal;color:#222;transform:scaleX(0.9023);transform-origin:0 0;">3.5 ns</div>
<div style="position:absolute;left:388px;top:132.88px;height:10px;line-height:10px;white-space:pre;font-family:'Liberation Sans', sans-serif;font-size:8.3px;font-weight:normal;color:#222;transform:scaleX(0.9225);transform-origin:0 0;">11.09 us</div>
<div style="position:absolute;left:436px;top:132.88px;height:10px;line-height:10px;white-space:pre;font-family:'Liberation Sans', sans-serif;font-size:8.3px;font-weight:normal;color:#222;transform:scaleX(0.8822);transform-origin:0 0;">27.88 MHz</div>
<div style="position:absolute;left:485px;top:132.88px;height:10px;line-height:10px;white-space:pre;font-family:'Liberation Sans', sans-serif;font-size:8.3px;font-weight:normal;color:#222;transform:scaleX(0.8822);transform-origin:0 0;">783.1 MHz</div>
<div style="position:absolute;left:534px;top:132.88px;height:10px;line-height:10px;white-space:pre;font-family:'Liberation Sans', sans-serif;font-size:8.3px;font-weight:normal;color:#222;transform:scaleX(0.9163);transform-origin:0 0;">35470 °</div>
<div style="position:absolute;left:321.5px;top:143.33px;height:10px;line-height:10px;white-space:pre;font-family:'Liberation Sans', sans-serif;font-size:8.3px;font-weight:normal;color:#222;transform:scaleX(0.9739);transform-origin:0 0;">11</div>
<div style="position:absolute;left:346.5px;top:143.33px;height:10px;line-height:10px;white-space:pre;font-family:'Liberation Sans', sans-serif;font-size:8.3px;font-weight:normal;color:#222;transform:scaleX(0.9023);transform-origin:0 0;">6.7 ns</div>
<div style="position:absolute;left:388px;top:143.33px;height:10px;line-height:10px;white-space:pre;font-family:'Liberation Sans', sans-serif;font-size:8.3px;font-weight:normal;color:#222;transform:scaleX(0.9225);transform-origin:0 0;">11.10 us</div>
<div style="position:absolute;left:436px;top:143.33px;height:10px;line-height:10px;white-space:pre;font-family:'Liberation Sans', sans-serif;font-size:8.3px;font-weight:normal;color:#222;transform:scaleX(0.8860);transform-origin:0 0;">-25.97 MHz</div>
<div style="position:absolute;left:485px;top:143.33px;height:10px;line-height:10px;white-space:pre;font-family:'Liberation Sans', sans-serif;font-size:8.3px;font-weight:normal;color:#222;transform:scaleX(0.8822);transform-origin:0 0;">792.0 MHz</div>
<div style="position:absolute;left:534px;top:143.33px;height:10px;line-height:10px;white-space:pre;font-family:'Liberation Sans', sans-serif;font-size:8.3px;font-weight:normal;color:#222;transform:scaleX(0.9163);transform-origin:0 0;">35490 °</div>
<div style="position:absolute;left:321.5px;top:153.78px;height:10px;line-height:10px;white-space:pre;font-family:'Liberation Sans', sans-serif;font-size:8.3px;font-weight:normal;color:#222;transform:scaleX(0.9096);transform-origin:0 0;">12</div>
<div style="position:absolute;left:346.5px;top:153.78px;height:10px;line-height:10px;white-space:pre;font-family:'Liberation Sans', sans-serif;font-size:8.3px;font-weight:normal;color:#222;transform:scaleX(0.9023);transform-origin:0 0;">6.5 ns</div>
<div style="position:absolute;left:388px;top:153.78px;height:10px;line-height:10px;white-space:pre;font-family:'Liberation Sans', sans-serif;font-size:8.3px;font-weight:normal;color:#222;transform:scaleX(0.9225);transform-origin:0 0;">11.09 us</div>
<div style="position:absolute;left:436px;top:153.78px;height:10px;line-height:10px;white-space:pre;font-family:'Liberation Sans', sans-serif;font-size:8.3px;font-weight:normal;color:#222;transform:scaleX(0.8860);transform-origin:0 0;">-30.33 MHz</div>
<div style="position:absolute;left:485px;top:153.78px;height:10px;line-height:10px;white-space:pre;font-family:'Liberation Sans', sans-serif;font-size:8.3px;font-weight:normal;color:#222;transform:scaleX(0.8822);transform-origin:0 0;">801.6 MHz</div>
<div style="position:absolute;left:534px;top:153.78px;height:10px;line-height:10px;white-space:pre;font-family:'Liberation Sans', sans-serif;font-size:8.3px;font-weight:normal;color:#222;transform:scaleX(0.9163);transform-origin:0 0;">35520 °</div>
<div style="position:absolute;left:321.5px;top:164.22px;height:10px;line-height:10px;white-space:pre;font-family:'Liberation Sans', sans-serif;font-size:8.3px;font-weight:normal;color:#222;transform:scaleX(0.9096);transform-origin:0 0;">13</div>
<div style="position:absolute;left:346.5px;top:164.22px;height:10px;line-height:10px;white-space:pre;font-family:'Liberation Sans', sans-serif;font-size:8.3px;font-weight:normal;color:#222;transform:scaleX(0.9023);transform-origin:0 0;">.63 ns</div>
<div style="position:absolute;left:388px;top:164.22px;height:10px;line-height:10px;white-space:pre;font-family:'Liberation Sans', sans-serif;font-size:8.3px;font-weight:normal;color:#222;transform:scaleX(0.9225);transform-origin:0 0;">11.09 us</div>
<div style="position:absolute;left:436px;top:164.22px;height:10px;line-height:10px;white-space:pre;font-family:'Liberation Sans', sans-serif;font-size:8.3px;font-weight:normal;color:#222;transform:scaleX(0.8822);transform-origin:0 0;">34.85 MHz</div>
<div style="position:absolute;left:485px;top:164.22px;height:10px;line-height:10px;white-space:pre;font-family:'Liberation Sans', sans-serif;font-size:8.3px;font-weight:normal;color:#222;transform:scaleX(0.8822);transform-origin:0 0;">806.0 MHz</div>
<div style="position:absolute;left:534px;top:164.22px;height:10px;line-height:10px;white-space:pre;font-family:'Liberation Sans', sans-serif;font-size:8.3px;font-weight:normal;color:#222;transform:scaleX(0.9163);transform-origin:0 0;">35450 °</div>
<div style="position:absolute;left:321.5px;top:174.67px;height:10px;line-height:10px;white-space:pre;font-family:'Liberation Sans', sans-serif;font-size:8.3px;font-weight:normal;color:#222;transform:scaleX(0.9096);transform-origin:0 0;">14</div>
<div style="position:absolute;left:346.5px;top:174.67px;height:10px;line-height:10px;white-space:pre;font-family:'Liberation Sans', sans-serif;font-size:8.3px;font-weight:normal;color:#222;transform:scaleX(0.9023);transform-origin:0 0;">8.5 ns</div>
<div style="position:absolute;left:388px;top:174.67px;height:10px;line-height:10px;white-space:pre;font-family:'Liberation Sans', sans-serif;font-size:8.3px;font-weight:normal;color:#222;transform:scaleX(0.9225);transform-origin:0 0;">11.09 us</div>
<div style="position:absolute;left:436px;top:174.67px;height:10px;line-height:10px;white-space:pre;font-family:'Liberation Sans', sans-serif;font-size:8.3px;font-weight:normal;color:#222;transform:scaleX(0.8822);transform-origin:0 0;">35.06 MHz</div>
<div style="position:absolute;left:485px;top:174.67px;height:10px;line-height:10px;white-space:pre;font-family:'Liberation Sans', sans-serif;font-size:8.3px;font-weight:normal;color:#222;transform:scaleX(0.8822);transform-origin:0 0;">801.0 MHz</div>
<div style="position:absolute;left:534px;top:174.67px;height:10px;line-height:10px;white-space:pre;font-family:'Liberation Sans', sans-serif;font-size:8.3px;font-weight:normal;color:#222;transform:scaleX(0.9163);transform-origin:0 0;">35480 °</div>
<div style="position:absolute;left:321.5px;top:185.12px;height:10px;line-height:10px;white-space:pre;font-family:'Liberation Sans', sans-serif;font-size:8.3px;font-weight:normal;color:#222;transform:scaleX(0.9096);transform-origin:0 0;">15</div>
<div style="position:absolute;left:346.5px;top:185.12px;height:10px;line-height:10px;white-space:pre;font-family:'Liberation Sans', sans-serif;font-size:8.3px;font-weight:normal;color:#222;transform:scaleX(0.9023);transform-origin:0 0;">3.8 ns</div>
<div style="position:absolute;left:388px;top:185.12px;height:10px;line-height:10px;white-space:pre;font-family:'Liberation Sans', sans-serif;font-size:8.3px;font-weight:normal;color:#222;transform:scaleX(0.9225);transform-origin:0 0;">11.10 us</div>
<div style="position:absolute;left:436px;top:185.12px;height:10px;line-height:10px;white-space:pre;font-family:'Liberation Sans', sans-serif;font-size:8.3px;font-weight:normal;color:#222;transform:scaleX(0.8860);transform-origin:0 0;">-29.84 MHz</div>
<div style="position:absolute;left:485px;top:185.12px;height:10px;line-height:10px;white-space:pre;font-family:'Liberation Sans', sans-serif;font-size:8.3px;font-weight:normal;color:#222;transform:scaleX(0.8822);transform-origin:0 0;">797.6 MHz</div>
<div style="position:absolute;left:534px;top:185.12px;height:10px;line-height:10px;white-space:pre;font-family:'Liberation Sans', sans-serif;font-size:8.3px;font-weight:normal;color:#222;transform:scaleX(0.9163);transform-origin:0 0;">35550 °</div>
<div style="position:absolute;left:321.5px;top:195.58px;height:10px;line-height:10px;white-space:pre;font-family:'Liberation Sans', sans-serif;font-size:8.3px;font-weight:normal;color:#222;transform:scaleX(0.9096);transform-origin:0 0;">16</div>
<div style="position:absolute;left:346.5px;top:195.58px;height:10px;line-height:10px;white-space:pre;font-family:'Liberation Sans', sans-serif;font-size:8.3px;font-weight:normal;color:#222;transform:scaleX(0.9023);transform-origin:0 0;">0.8 ns</div>
<div style="position:absolute;left:388px;top:195.58px;height:10px;line-height:10px;white-space:pre;font-family:'Liberation Sans', sans-serif;font-size:8.3px;font-weight:normal;color:#222;transform:scaleX(0.9225);transform-origin:0 0;">11.09 us</div>
<div style="position:absolute;left:436px;top:195.58px;height:10px;line-height:10px;white-space:pre;font-family:'Liberation Sans', sans-serif;font-size:8.3px;font-weight:normal;color:#222;transform:scaleX(0.8822);transform-origin:0 0;">38.59 MHz</div>
<div style="position:absolute;left:485px;top:195.58px;height:10px;line-height:10px;white-space:pre;font-family:'Liberation Sans', sans-serif;font-size:8.3px;font-weight:normal;color:#222;transform:scaleX(0.8822);transform-origin:0 0;">805.0 MHz</div>
<div style="position:absolute;left:534px;top:195.58px;height:10px;line-height:10px;white-space:pre;font-family:'Liberation Sans', sans-serif;font-size:8.3px;font-weight:normal;color:#222;transform:scaleX(0.9163);transform-origin:0 0;">35480 °</div>
<div style="position:absolute;left:321.5px;top:206.03px;height:10px;line-height:10px;white-space:pre;font-family:'Liberation Sans', sans-serif;font-size:8.3px;font-weight:normal;color:#222;transform:scaleX(0.9096);transform-origin:0 0;">17</div>
<div style="position:absolute;left:346.5px;top:206.03px;height:10px;line-height:10px;white-space:pre;font-family:'Liberation Sans', sans-serif;font-size:8.3px;font-weight:normal;color:#222;transform:scaleX(0.9023);transform-origin:0 0;">7.6 ns</div>
<div style="position:absolute;left:388px;top:206.03px;height:10px;line-height:10px;white-space:pre;font-family:'Liberation Sans', sans-serif;font-size:8.3px;font-weight:normal;color:#222;transform:scaleX(0.9225);transform-origin:0 0;">11.09 us</div>
<div style="position:absolute;left:436px;top:206.03px;height:10px;line-height:10px;white-space:pre;font-family:'Liberation Sans', sans-serif;font-size:8.3px;font-weight:normal;color:#222;transform:scaleX(0.8822);transform-origin:0 0;">27.20 MHz</div>
<div style="position:absolute;left:485px;top:206.03px;height:10px;line-height:10px;white-space:pre;font-family:'Liberation Sans', sans-serif;font-size:8.3px;font-weight:normal;color:#222;transform:scaleX(0.8822);transform-origin:0 0;">793.7 MHz</div>
<div style="position:absolute;left:534px;top:206.03px;height:10px;line-height:10px;white-space:pre;font-family:'Liberation Sans', sans-serif;font-size:8.3px;font-weight:normal;color:#222;transform:scaleX(0.9163);transform-origin:0 0;">35560 °</div>
<div style="position:absolute;left:321.5px;top:216.47px;height:10px;line-height:10px;white-space:pre;font-family:'Liberation Sans', sans-serif;font-size:8.3px;font-weight:normal;color:#222;transform:scaleX(0.9096);transform-origin:0 0;">18</div>
<div style="position:absolute;left:346.5px;top:216.47px;height:10px;line-height:10px;white-space:pre;font-family:'Liberation Sans', sans-serif;font-size:8.3px;font-weight:normal;color:#222;transform:scaleX(0.9023);transform-origin:0 0;">1.3 ns</div>
<div style="position:absolute;left:388px;top:216.47px;height:10px;line-height:10px;white-space:pre;font-family:'Liberation Sans', sans-serif;font-size:8.3px;font-weight:normal;color:#222;transform:scaleX(0.9346);transform-origin:0 0;">-- s</div>
<div style="position:absolute;left:436px;top:216.47px;height:10px;line-height:10px;white-space:pre;font-family:'Liberation Sans', sans-serif;font-size:8.3px;font-weight:normal;color:#222;transform:scaleX(0.8860);transform-origin:0 0;">-30.87 MHz</div>
<div style="position:absolute;left:485px;top:216.47px;height:10px;line-height:10px;white-space:pre;font-family:'Liberation Sans', sans-serif;font-size:8.3px;font-weight:normal;color:#222;transform:scaleX(0.8822);transform-origin:0 0;">797.1 MHz</div>
<div style="position:absolute;left:534px;top:216.47px;height:10px;line-height:10px;white-space:pre;font-family:'Liberation Sans', sans-serif;font-size:8.3px;font-weight:normal;color:#222;transform:scaleX(0.9163);transform-origin:0 0;">35490 °</div>
<div style="position:absolute;left:68px;top:265.8px;height:10px;line-height:10px;white-space:pre;font-family:'Liberation Sans', sans-serif;font-size:8.3px;font-weight:normal;color:#222;transform:scaleX(0.8433);transform-origin:0 0;">995 MHz</div>
<div style="position:absolute;left:10px;top:274.3px;height:10px;line-height:10px;white-space:pre;font-family:'Liberation Sans', sans-serif;font-size:8.3px;font-weight:normal;color:#222;transform:scaleX(0.8518);transform-origin:0 0;">Result:</div>
<div style="position:absolute;left:12px;top:284.9px;height:10px;line-height:10px;white-space:pre;font-family:'Liberation Sans', sans-serif;font-size:8.3px;font-weight:normal;color:#222;transform:scaleX(0.9084);transform-origin:0 0;">Freq Dev</div>
<div style="position:absolute;left:20px;top:299.8px;height:10px;line-height:10px;white-space:pre;font-family:'Liberation Sans', sans-serif;font-size:10px;font-weight:bold;color:#222;transform:scaleX(0.9135);transform-origin:0 0;">Pulse 8</div>
<div style="position:absolute;left:16px;top:312.9px;height:10px;line-height:10px;white-space:pre;font-family:'Liberation Sans', sans-serif;font-size:10px;font-weight:normal;color:#222;transform:scaleX(0.9719);transform-origin:0 0;-webkit-text-stroke:0.35px #222">801.0 MHz</div>
<div style="position:absolute;left:66px;top:351.9px;height:10px;line-height:10px;white-space:pre;font-family:'Liberation Sans', sans-serif;font-size:8.3px;font-weight:normal;color:#222;transform:scaleX(0.8169);transform-origin:0 0;">Position:</div>
<div style="position:absolute;left:65px;top:361.5px;height:10px;line-height:10px;white-space:pre;font-family:'Liberation Sans', sans-serif;font-size:8.3px;font-weight:normal;color:#222;transform:scaleX(0.8359);transform-origin:0 0;">-6.65 MHz</div>
<div style="position:absolute;left:64px;top:404.9px;height:10px;line-height:10px;white-space:pre;font-family:'Liberation Sans', sans-serif;font-size:8.3px;font-weight:normal;color:#222;transform:scaleX(0.8198);transform-origin:0 0;">-1.01 GHz</div>
<div style="position:absolute;left:70px;top:420.8px;height:10px;line-height:10px;white-space:pre;font-family:'Liberation Sans', sans-serif;font-size:8.3px;font-weight:normal;color:#222;transform:scaleX(0.8508);transform-origin:0 0;">Autoscale</div>
<div style="position:absolute;left:120px;top:421.3px;height:10px;line-height:10px;white-space:pre;font-family:'Liberation Sans', sans-serif;font-size:8.3px;font-weight:normal;color:#222;transform:scaleX(0.9552);transform-origin:0 0;">80.7 us</div>
<div style="position:absolute;left:239px;top:421.5px;height:10px;line-height:10px;white-space:pre;font-family:'Liberation Sans', sans-serif;font-size:8.3px;font-weight:normal;color:#222;transform:scaleX(0.8499);transform-origin:0 0;">Scale: 1.30 us</div>
<div style="position:absolute;left:427px;top:262.8px;height:10px;line-height:10px;white-space:pre;font-family:'Liberation Sans', sans-serif;font-size:8.3px;font-weight:normal;color:#222;transform:scaleX(0.8224);transform-origin:0 0;">Normal</div>
<div style="position:absolute;left:570.5px;top:262.5px;height:10px;line-height:10px;white-space:pre;font-family:'Liberation Sans', sans-serif;font-size:8.3px;font-weight:normal;color:#222;transform:scaleX(0.7565);transform-origin:0 0;">Clear</div>
<div style="position:absolute;left:314px;top:275.3px;height:10px;line-height:10px;white-space:pre;font-family:'Liberation Sans', sans-serif;font-size:8.3px;font-weight:normal;color:#222;transform:scaleX(0.8715);transform-origin:0 0;">1.66 M°</div>
<div style="position:absolute;left:311px;top:334.1px;height:10px;line-height:10px;white-space:pre;font-family:'Liberation Sans', sans-serif;font-size:8.3px;font-weight:normal;color:#222;transform:scaleX(0.8483);transform-origin:0 0;">Position:</div>
<div style="position:absolute;left:311px;top:343.3px;height:10px;line-height:10px;white-space:pre;font-family:'Liberation Sans', sans-serif;font-size:8.3px;font-weight:normal;color:#222;transform:scaleX(0.8715);transform-origin:0 0;">1.64 M°</div>
<div style="position:absolute;left:305px;top:393.3px;height:10px;line-height:10px;white-space:pre;font-family:'Liberation Sans', sans-serif;font-size:8.3px;font-weight:normal;color:#222;transform:scaleX(0.9063);transform-origin:0 0;">1.62 M°</div>
<div style="position:absolute;left:310px;top:409.5px;height:10px;line-height:10px;white-space:pre;font-family:'Liberation Sans', sans-serif;font-size:8.3px;font-weight:normal;color:#222;transform:scaleX(0.8233);transform-origin:0 0;">Autoscale</div>
<div style="position:absolute;left:305px;top:423.3px;height:10px;line-height:10px;white-space:pre;font-family:'Liberation Sans', sans-serif;font-size:7.8px;font-weight:normal;color:#222;transform:scaleX(0.8264);transform-origin:0 0;">Max:  3499000 °</div>
<div style="position:absolute;left:374px;top:423.3px;height:10px;line-height:10px;white-space:pre;font-family:'Liberation Sans', sans-serif;font-size:7.8px;font-weight:normal;color:#222;transform:scaleX(0.8062);transform-origin:0 0;">@  200.1 us</div>
<div style="position:absolute;left:424px;top:423.3px;height:10px;line-height:10px;white-space:pre;font-family:'Liberation Sans', sans-serif;font-size:7.8px;font-weight:normal;color:#222;transform:scaleX(0.8038);transform-origin:0 0;">Min: 0.0000 °</div>
<div style="position:absolute;left:487px;top:423.3px;height:10px;line-height:10px;white-space:pre;font-family:'Liberation Sans', sans-serif;font-size:7.8px;font-weight:normal;color:#222;transform:scaleX(0.8250);transform-origin:0 0;">@ 100.8 ns</div>
<div style="position:absolute;left:373.7px;top:411.3px;height:10px;line-height:10px;white-space:pre;font-family:'Liberation Sans', sans-serif;font-size:8.3px;font-weight:normal;color:#222;transform:scaleX(0.8685);transform-origin:0 0;">Position: 91.695 us</div>
<div style="position:absolute;left:523px;top:411.3px;height:10px;line-height:10px;white-space:pre;font-family:'Liberation Sans', sans-serif;font-size:8.3px;font-weight:normal;color:#222;transform:scaleX(0.8514);transform-origin:0 0;">Scale: 1.459 us</div>
<div style="position:absolute;left:3px;top:438.3px;height:10px;line-height:10px;white-space:pre;font-family:'Liberation Sans', sans-serif;font-size:8.3px;font-weight:normal;color:#222;transform:scaleX(0.8732);transform-origin:0 0;">Stopped</div>
<div style="position:absolute;left:62px;top:438.3px;height:10px;line-height:10px;white-space:pre;font-family:'Liberation Sans', sans-serif;font-size:8.3px;font-weight:normal;color:#222;transform:scaleX(0.8742);transform-origin:0 0;">Acq BW: 2.20 GHz, Acq Length: 200.184 us</div>
<div style="position:absolute;left:228px;top:438.3px;height:10px;line-height:10px;white-space:pre;font-family:'Liberation Sans', sans-serif;font-size:8.3px;font-weight:normal;color:#222;transform:scaleX(0.8164);transform-origin:0 0;">Real Time</div>
<div style="position:absolute;left:322px;top:438.3px;height:10px;line-height:10px;white-space:pre;font-family:'Liberation Sans', sans-serif;font-size:8.3px;font-weight:normal;color:#222;transform:scaleX(0.8465);transform-origin:0 0;">Scope sample rate 50.000 GHz</div>
</body></html>
